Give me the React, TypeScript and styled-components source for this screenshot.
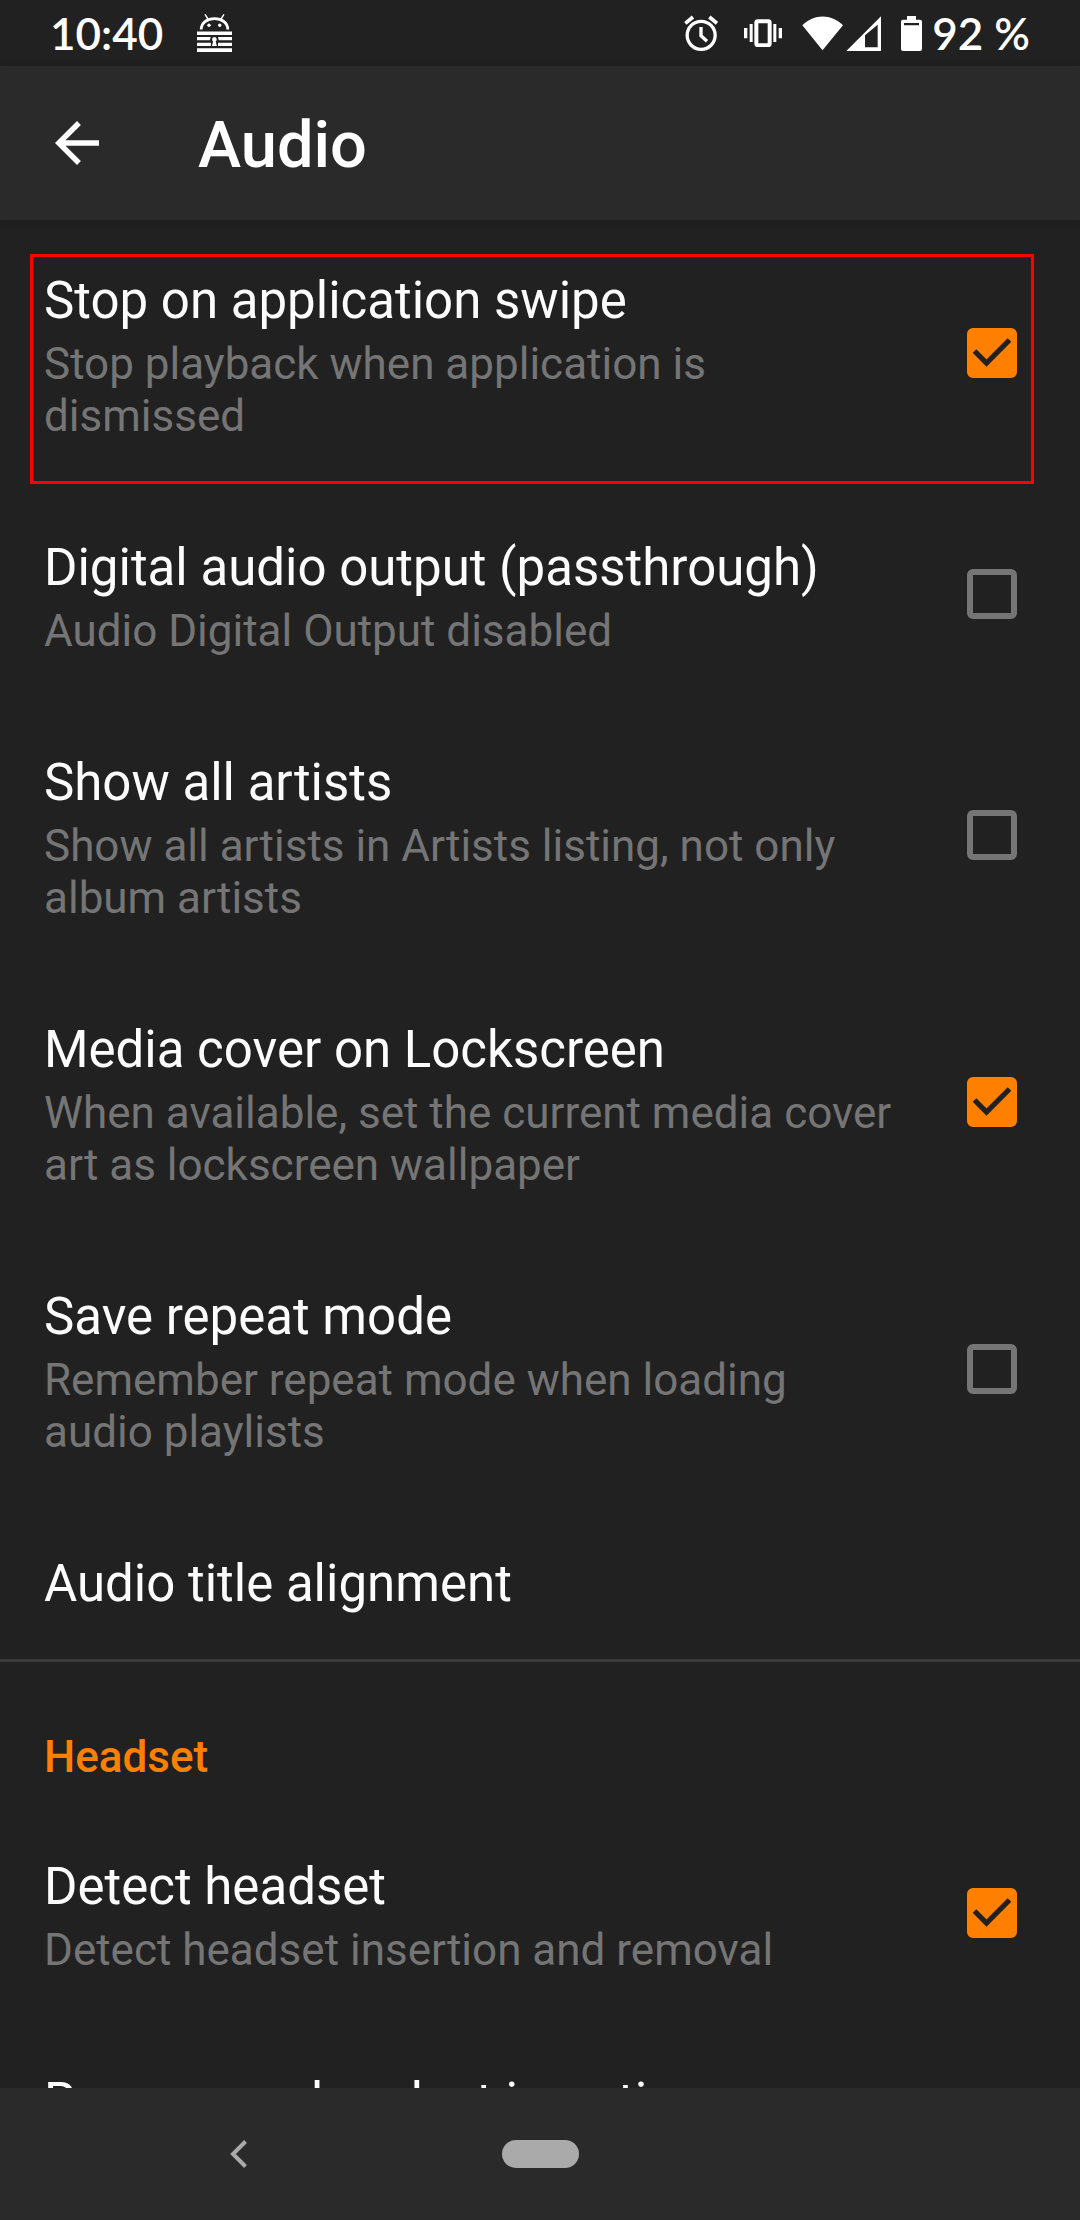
import React, { useId, useState } from "react";
import styled, { createGlobalStyle } from "styled-components";

const color = {
  surface: "#212121",
  bar: "#2a2a2a",
  text: "#fcfcfc",
  muted: "#757575",
  accent: "#ff8000",
  divider: "#3b3b3b",
  highlight: "#ff0000",
  nav: "#aaaaaa",
};

const GlobalStyle = createGlobalStyle`
  * { box-sizing: border-box; }
  body {
    margin: 0;
    background: ${color.surface};
    color: ${color.text};
    font-family: Roboto, "Liberation Sans", sans-serif;
  }
  button {
    border: 0;
    padding: 0;
    background: none;
    color: inherit;
    font: inherit;
    text-align: left;
    cursor: pointer;
  }
`;

const Screen = styled.div`
  display: flex;
  flex-direction: column;
  height: 100vh;
  background: ${color.surface};
`;

const StatusBar = styled.div`
  display: flex;
  flex: none;
  align-items: center;
  justify-content: space-between;
  height: 66px;
  padding: 0 50px;
  color: #fff;
  font-family: Lato, "Liberation Sans", sans-serif;
  font-size: 44px;
  font-weight: 600;
  line-height: 66px;
  white-space: nowrap;
`;

const StatusGroup = styled.div<{ $gap: number }>`
  display: flex;
  align-items: center;
  gap: ${(p) => p.$gap}px;

  svg {
    display: block;
    fill: currentColor;
  }
`;

const Toolbar = styled.header`
  display: flex;
  flex: none;
  align-items: center;
  gap: 88px;
  height: 154px;
  padding: 0 44px;
  background: ${color.bar};
  box-shadow: 0 1px 8px rgba(0, 0, 0, 0.15);
  color: #fff;
  z-index: 1;
`;

const IconButton = styled.button`
  display: block;

  svg {
    display: block;
  }
`;

const ToolbarTitle = styled.h1`
  margin: 0;
  padding-top: 4px;
  font-size: 65px;
  font-weight: 500;
  line-height: 74px;
`;

const Settings = styled.main`
  flex: 1;
  min-height: 0;
  overflow-y: auto;
  scrollbar-width: none;
`;

const Section = styled.section`
  display: flex;
  flex-direction: column;
  gap: 15px;
  padding: 7px 0 8px;

  & + & {
    border-top: 3px solid ${color.divider};
  }
`;

const SectionTitle = styled.h2`
  margin: 0;
  padding: 62px 44px 15px;
  color: ${color.accent};
  font-size: 44px;
  font-weight: 500;
  line-height: 52px;
`;

const Row = styled.div`
  position: relative;
  display: flex;
  align-items: center;
  gap: 64px;
  padding: 37px 63px 37px 44px;
`;

const Highlight = styled.div`
  position: absolute;
  inset: 27px 46px -5px 30px;
  border: 3px solid ${color.highlight};
  pointer-events: none;
`;

const RowText = styled.div`
  flex: 1;
  min-width: 0;
  padding-top: 7px;
`;

const RowTitle = styled.label`
  display: block;
  font-size: 51px;
  line-height: 60px;
`;

const RowSummary = styled.p`
  margin: 7px 0 0;
  color: ${color.muted};
  font-size: 44px;
  line-height: 52px;
`;

const Box = styled.span`
  display: grid;
  flex: none;
  width: 50px;
  height: 50px;

  > * {
    grid-area: 1 / 1;
  }

  svg {
    width: 50px;
    height: 50px;
    pointer-events: none;
  }
`;

const BoxInput = styled.input`
  appearance: none;
  width: 50px;
  height: 50px;
  margin: 0;
  border: 6px solid ${color.muted};
  border-radius: 6px;
  cursor: pointer;

  &:checked {
    border-color: ${color.accent};
    background: ${color.accent};
  }
`;

const NavBar = styled.nav`
  display: grid;
  flex: none;
  grid-template-columns: 1fr auto 1fr;
  align-items: center;
  height: 132px;
  background: ${color.bar};
`;

const NavBack = styled(IconButton)`
  justify-self: center;
  margin-right: 24px;
`;

const HomePill = styled.button`
  width: 77px;
  height: 28px;
  border-radius: 14px;
  background: ${color.nav};
`;

type Option = {
  title: string;
  summary: string;
  on?: boolean;
  highlighted?: boolean;
};

const audioOptions: Option[] = [
  {
    title: "Stop on application swipe",
    summary: "Stop playback when application is dismissed",
    on: true,
    highlighted: true,
  },
  {
    title: "Digital audio output (passthrough)",
    summary: "Audio Digital Output disabled",
  },
  {
    title: "Show all artists",
    summary: "Show all artists in Artists listing, not only album artists",
  },
  {
    title: "Media cover on Lockscreen",
    summary:
      "When available, set the current media cover art as lockscreen wallpaper",
    on: true,
  },
  {
    title: "Save repeat mode",
    summary: "Remember repeat mode when loading audio playlists",
  },
];

const headsetOptions: Option[] = [
  {
    title: "Detect headset",
    summary: "Detect headset insertion and removal",
    on: true,
  },
];

function OptionRow({ title, summary, on = false, highlighted }: Option) {
  const id = useId();
  const [checked, setChecked] = useState(on);
  return (
    <Row>
      <RowText>
        <RowTitle htmlFor={id}>{title}</RowTitle>
        <RowSummary id={`${id}-summary`}>{summary}</RowSummary>
      </RowText>
      <Box>
        <BoxInput
          id={id}
          type="checkbox"
          checked={checked}
          aria-describedby={`${id}-summary`}
          onChange={(e) => setChecked(e.target.checked)}
        />
        {checked && (
          <svg viewBox="0 0 50 50" aria-hidden="true">
            <path
              d="M7.5 23 L19.5 35 L42.5 12"
              fill="none"
              stroke={color.surface}
              strokeWidth="5.2"
            />
          </svg>
        )}
      </Box>
      {highlighted && <Highlight />}
    </Row>
  );
}

const LinkRow = ({ title }: { title: string }) => (
  <Row as="button" type="button">
    <RowText as="span">
      <RowTitle as="span">{title}</RowTitle>
    </RowText>
  </Row>
);

const DebugIcon = () => (
  <svg width="36" height="40" viewBox="197 13 36 40" aria-hidden="true">
    <path
      d="M201.2 29.5 C201.2 22.8 207 18.6 214.5 18.6 C222 18.6 227.8 22.8 227.8 29.5"
      fill="none"
      stroke="currentColor"
      strokeWidth="2.8"
    />
    <path
      d="M205 14.4 L208 19 M224 14.4 L221 19"
      stroke="currentColor"
      strokeWidth="1.4"
    />
    <circle cx="209" cy="25.3" r="1.7" />
    <circle cx="219.7" cy="25.3" r="1.7" />
    <path d="M197 31.4h35v3.5h-35z M197 48.3h35v3.6h-35z" />
    <path d="M197 37h13.7l-.8 3.3H197z M218 37h14v3.3h-13.2z" />
    <path d="M197 42.7h13.9v3.3H197z M218 42.7h14v3.3h-14z" />
    <path d="M214.4 37a2.4 2.4 0 0 1 1.3 4.4l1.2 4.6h-5l1.2-4.6a2.4 2.4 0 0 1 1.3-4.4z" />
  </svg>
);

const AlarmIcon = () => (
  <svg width="34" height="37" viewBox="76 42 102 111" aria-hidden="true">
    <g fill="none" stroke="currentColor">
      <circle cx="127.5" cy="103" r="42" strokeWidth="10" />
      <path d="M127 78 V104 L145 121" strokeWidth="10" />
      <path d="M80 67 L103 48 M152 48 L175 67" strokeWidth="11" />
    </g>
  </svg>
);

const VibrateIcon = () => (
  <svg width="38" height="28" viewBox="255 56 114 84" aria-hidden="true">
    <rect
      x="292"
      y="62.5"
      width="40"
      height="72"
      rx="4"
      fill="none"
      stroke="currentColor"
      strokeWidth="12"
    />
    <path d="M272 71h9v54h-9z M255 83h10v31h-10z M343 71h9v54h-9z M359 83h10v31h-10z" />
  </svg>
);

const WifiIcon = () => (
  <svg width="41" height="35" viewBox="429 45 123 105" aria-hidden="true">
    <path d="M430 73 C465 37.5 517 37.5 552 73 L490.5 148 Z" />
  </svg>
);

const SignalIcon = () => (
  <svg width="35" height="35" viewBox="561 45 105 105" aria-hidden="true">
    <path
      fillRule="evenodd"
      d="M562 150 L666 46 V150 Z M618 103 V139 H656 V71 Z"
    />
  </svg>
);

const BatteryIcon = () => (
  <svg width="21" height="35" viewBox="726 46 63 105" aria-hidden="true">
    <path
      fillRule="evenodd"
      d="M744 46h27v11h12a6 6 0 0 1 6 6v82a6 6 0 0 1-6 6h-51a6 6 0 0 1-6-6V63a6 6 0 0 1 6-6h12z M735 67v7h45v-7z"
    />
  </svg>
);

export default function App() {
  return (
    <>
      <GlobalStyle />
      <Screen>
        <StatusBar>
          <StatusGroup $gap={34}>
            <span>10:40</span>
            <DebugIcon />
          </StatusGroup>
          <StatusGroup $gap={20}>
            <StatusGroup $gap={26}>
              <AlarmIcon />
              <VibrateIcon />
            </StatusGroup>
            <StatusGroup $gap={3}>
              <WifiIcon />
              <SignalIcon />
            </StatusGroup>
            <StatusGroup $gap={10}>
              <BatteryIcon />
              <span>92 %</span>
            </StatusGroup>
          </StatusGroup>
        </StatusBar>
        <Toolbar>
          <IconButton type="button" aria-label="Back">
            <svg width="66" height="66" viewBox="0 0 24 24" aria-hidden="true">
              <path
                d="M20 11H7.83l5.59-5.59L12 4l-8 8 8 8 1.41-1.41L7.83 13H20v-2z"
                fill="currentColor"
              />
            </svg>
          </IconButton>
          <ToolbarTitle>Audio</ToolbarTitle>
        </Toolbar>
        <Settings>
          <Section>
            {audioOptions.map((option) => (
              <OptionRow key={option.title} {...option} />
            ))}
            <LinkRow title="Audio title alignment" />
          </Section>
          <Section>
            <SectionTitle>Headset</SectionTitle>
            {headsetOptions.map((option) => (
              <OptionRow key={option.title} {...option} />
            ))}
            <LinkRow title="Resume on headset insertion" />
          </Section>
        </Settings>
        <NavBar>
          <NavBack type="button" aria-label="Back">
            <svg width="18" height="28" viewBox="0 0 18 28" aria-hidden="true">
              <path
                d="M15.5 1.5 L3 14 L15.5 26.5"
                fill="none"
                stroke={color.nav}
                strokeWidth="4"
              />
            </svg>
          </NavBack>
          <HomePill type="button" aria-label="Home" />
        </NavBar>
      </Screen>
    </>
  );
}
